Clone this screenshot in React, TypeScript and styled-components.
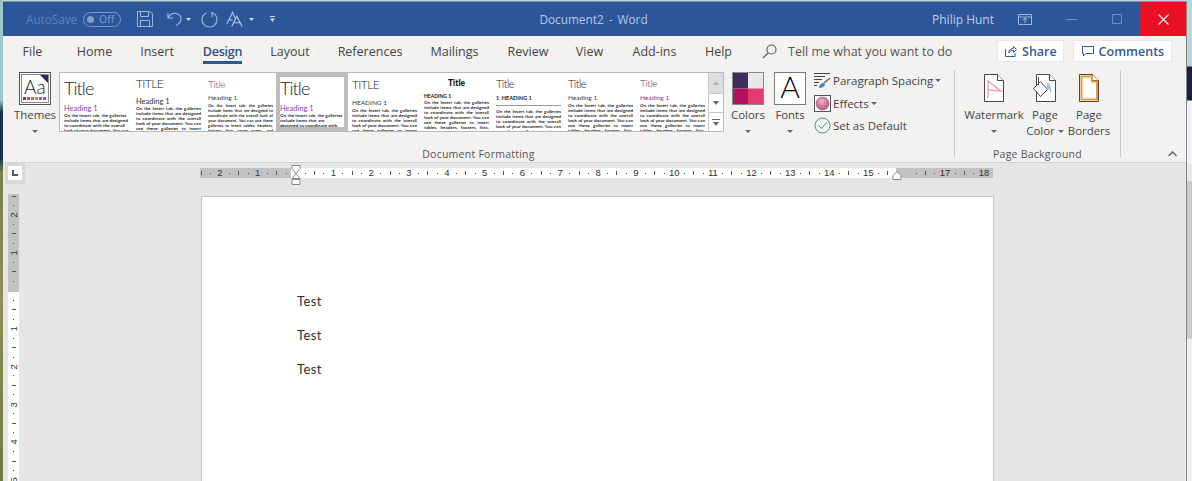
import React from "react";
import styled, { createGlobalStyle } from "styled-components";

const Global = createGlobalStyle`
  html, body { margin: 0; padding: 0; background: #b5d6dc; overflow: hidden; }
  * { box-sizing: border-box; }
`;

const UI = `"Open Sans", "Noto Sans", sans-serif`;
const DOC = `Lato, "Liberation Sans", sans-serif`;

const Screen = styled.div`
  display: flex;
  width: 1192px;
  height: 481px;
  overflow: hidden;
`;
const DesktopLeft = styled.div`
  flex: 0 0 3px;
  background: linear-gradient(180deg, #9cc8cc 0, #9cc8cc 100px, #14304e 112px, #14304e 158px, #7b7f4c 172px, #8f8d58 300px, #6f7a45 481px);
`;
const DesktopRight = styled.div`
  flex: 0 0 5px;
  background: linear-gradient(180deg, #b5d6dc 0, #b5d6dc 66px, #1a1e40 67px, #1a1e40 100px, #f1f3f6 101px, #f1f3f6 163px, #e9e9e9 164px, #e9e9e9 181px, #c8c8c8 182px, #c8c8c8 338px, #efefef 339px);
`;
const Window = styled.div`
  flex: 0 0 1184px;
  display: flex;
  flex-direction: column;
  margin-top: 1px;
  border-top: 1px solid #7f9aa3;
  border-right: 1px solid #858585;
  background: #e6e6e6;
  font-family: ${UI};
  overflow: hidden;
`;

const TitleBar = styled.div`
  flex: 0 0 34px;
  display: grid;
  grid-template-columns: 1fr auto 1fr;
  align-items: center;
  background: #2b579a;
`;
const Qat = styled.div`
  display: flex;
  align-items: center;
  padding-left: 23px;
  height: 100%;
`;
const AutoSave = styled.span`
  font-size: 11.7px;
  color: #5f84bb;
  width: 57px;
`;
const Toggle = styled.div`
  width: 38px;
  height: 15px;
  border: 1px solid #7d9ccb;
  border-radius: 8px;
  display: flex;
  align-items: center;
  gap: 5px;
  padding-left: 3px;
  font-size: 10.5px;
  color: #7d9ccb;
  line-height: 1;
  &::before {
    content: "";
    width: 7px;
    height: 7px;
    border-radius: 50%;
    background: #7d9ccb;
  }
`;
const QatIcon = styled.svg<{ $ml: number }>`
  margin-left: ${(p) => p.$ml}px;
  flex: none;
  display: block;
`;
const DocTitle = styled.div`
  font-size: 11.8px;
  color: #b7c8e2;
  word-spacing: 2px;
  white-space: pre;
  margin-left: -2px;
`;
const WinControls = styled.div`
  display: flex;
  align-items: center;
  justify-content: flex-end;
  height: 100%;
`;
const UserName = styled.span`
  font-size: 12px;
  color: #c0cfe6;
  margin-right: 8px;
`;
const WinBtn = styled.div<{ $w: number }>`
  flex: 0 0 ${(p) => p.$w}px;
  height: 100%;
  display: flex;
  align-items: center;
  justify-content: center;
`;
const CloseBtn = styled(WinBtn)`
  background: #e81123;
`;

const TabRow = styled.div`
  flex: 0 0 30px;
  display: flex;
  align-items: center;
  padding: 0 13px 0 7px;
  background: #f3f2f1;
  font-size: 12.5px;
  color: #444;
`;
const Tab = styled.div<{ $w: number; $active?: boolean }>`
  flex: 0 0 ${(p) => p.$w}px;
  text-align: center;
  color: #444;
  & > span {
    position: relative;
    display: inline-block;
    ${(p) => (p.$active ? "color:#33507f;font-weight:600;letter-spacing:-.2px;" : "")}
  }
  & > span::after {
    content: ${(p) => (p.$active ? '""' : "none")};
    position: absolute;
    left: 0;
    right: 0;
    bottom: -4px;
    height: 3px;
    background: #2b579a;
  }
`;
const SearchIcon = styled.svg`
  margin-left: 27px;
  flex: none;
`;
const TellMe = styled.div`
  margin-left: 11px;
  color: #555;
  font-size: 12.5px;
  white-space: nowrap;
`;
const HeaderBtn = styled.div<{ $w: number; $ml: number }>`
  flex: 0 0 ${(p) => p.$w}px;
  margin-left: ${(p) => p.$ml}px;
  height: 22px;
  background: #fff;
  border: 1px solid #e8e7e6;
  display: flex;
  align-items: center;
  justify-content: center;
  gap: 5px;
  font-size: 12.5px;
  font-weight: 600;
  color: #345a92;
`;

const Ribbon = styled.div`
  flex: 0 0 97px;
  display: flex;
  padding: 4px 0 5px;
  background: #f3f2f1;
  border-bottom: 1px solid #d2d2d2;
`;
const Group = styled.div<{ $w: number }>`
  flex: 0 0 ${(p) => p.$w}px;
  display: flex;
  flex-direction: column;
  border-right: 1px solid #c8c8c8;
`;
const GroupBody = styled.div<{ $pl: number }>`
  flex: 1;
  display: flex;
  align-items: flex-start;
  padding-left: ${(p) => p.$pl}px;
`;
const GroupLabel = styled.div`
  font-size: 10.5px;
  line-height: 14px;
  text-align: center;
  color: #555;
  letter-spacing: 0.25px;
  margin-bottom: -4px;
`;
const LargeBtn = styled.div<{ $w: number }>`
  flex: 0 0 ${(p) => p.$w}px;
  display: flex;
  flex-direction: column;
  align-items: center;
  padding-top: 2px;
  font-size: 11.4px;
  line-height: 16px;
  color: #444;
  text-align: center;
  white-space: nowrap;
`;
const IconSlot = styled.div`
  height: 33px;
  margin-bottom: 2px;
  display: flex;
  align-items: flex-start;
  justify-content: center;
`;
const Caret = styled.span`
  display: inline-block;
  width: 0;
  height: 0;
  border-left: 3px solid transparent;
  border-right: 3px solid transparent;
  border-top: 3px solid #666;
  vertical-align: middle;
`;
const CaretLine = styled.div`
  height: 16px;
  line-height: 15px;
`;

const Gallery = styled.div`
  flex: 0 0 665px;
  height: 60px;
  margin-top: 2px;
  display: flex;
  background: #fff;
  border: 1px solid #b9b9b9;
`;
const Thumb = styled.div<{ $selected?: boolean; $top: number }>`
  flex: 0 0 72px;
  height: 58px;
  padding: ${(p) => (p.$selected ? p.$top - 4 : p.$top)}px ${(p) => (p.$selected ? 0 : 3)}px 0 ${(p) => (p.$selected ? 0 : 4)}px;
  border: ${(p) => (p.$selected ? "4px solid #bdbdbd" : "0")};
  overflow: hidden;
  color: #222;
  font-family: ${DOC};
`;
const ThumbTitle = styled.div<{ $size: number; $color: string; $bold?: boolean; $center?: boolean; $lh: number }>`
  font-size: ${(p) => p.$size}px;
  line-height: ${(p) => p.$lh}px;
  color: ${(p) => p.$color};
  font-weight: ${(p) => (p.$bold ? 900 : 300)};
  letter-spacing: ${(p) => (p.$bold ? 0 : "-0.05em")};
  text-align: ${(p) => (p.$center ? "center" : "left")};
`;
const ThumbHead = styled.div<{ $size: number; $color: string; $bold?: boolean; $mt: number; $rule?: boolean }>`
  font-size: ${(p) => p.$size}px;
  line-height: ${(p) => p.$size + 2}px;
  margin-top: ${(p) => p.$mt}px;
  color: ${(p) => p.$color};
  font-weight: ${(p) => (p.$bold ? 700 : 400)};
  white-space: pre;
  ${(p) => (p.$rule ? "border-bottom:1px solid #999;padding-bottom:2px;" : "")}
`;
const ThumbBody = styled.div<{ $mt: number; $justify?: boolean; $size: number }>`
  font-size: ${(p) => p.$size}px;
  line-height: 5.1px;
  font-weight: 700;
  letter-spacing: 0.06px;
  margin-top: ${(p) => p.$mt}px;
  color: #1a1a1a;
  text-align: ${(p) => (p.$justify ? "justify" : "left")};
`;
const GalleryScroll = styled.div`
  flex: 0 0 15px;
  display: flex;
  flex-direction: column;
  border-left: 1px solid #c6c6c6;
`;
const ScrollCell = styled.div<{ $h: number; $off?: boolean }>`
  flex: 0 0 ${(p) => p.$h}px;
  background: ${(p) => (p.$off ? "#dedede" : "#fff")};
  border-bottom: 1px solid #c6c6c6;
  display: flex;
  flex-direction: column;
  gap: 1px;
  align-items: center;
  justify-content: center;
  &:last-child { border-bottom: 0; }
`;
const UpTri = styled.span<{ $c: string }>`
  width: 0;
  height: 0;
  border-left: 3.5px solid transparent;
  border-right: 3.5px solid transparent;
  border-bottom: 4px solid ${(p) => p.$c};
`;
const DownTri = styled.span`
  width: 0;
  height: 0;
  border-left: 3.5px solid transparent;
  border-right: 3.5px solid transparent;
  border-top: 4px solid #666;
`;
const Dash = styled.span`
  width: 8px;
  height: 1px;
  background: #666;
  margin-bottom: 1px;
`;

const SmallCol = styled.div`
  margin: -1px 0 0 6px;
  display: flex;
  flex-direction: column;
`;
const SmallRow = styled.div`
  height: 22.7px;
  display: flex;
  align-items: center;
  gap: 2px;
  font-size: 11.5px;
  color: #444;
  white-space: nowrap;
`;
const Collapse = styled.div`
  flex: 1;
  display: flex;
  align-items: flex-end;
  justify-content: flex-end;
  padding: 0 9px 0 0;
`;

const RulerRow = styled.div`
  flex: 0 0 33px;
  display: flex;
  align-items: flex-start;
`;
const Corner = styled.div`
  flex: 0 0 20px;
  height: 21px;
  margin-left: 2px;
  background: #d9d9d9;
  padding: 3px;
`;
const CornerInner = styled.div`
  height: 14px;
  background: #fff;
  display: flex;
  align-items: center;
  justify-content: center;
`;
const RulerH = styled.div`
  position: relative;
  flex: 0 0 793px;
  height: 10px;
  margin: 5px 0 0 175px;
  background: linear-gradient(90deg, #c2c2c2 0, #c2c2c2 91px, #fff 91px, #fff 696px, #c2c2c2 696px);
  display: flex;
  align-items: center;
`;
const TrackH = styled.div`
  display: flex;
  margin-left: -3.7px;
  height: 100%;
`;
const Cell = styled.div`
  flex: 0 0 9.4625px;
  height: 100%;
  display: flex;
  align-items: center;
  justify-content: center;
  font-size: 9.5px;
  font-family: "Liberation Sans", sans-serif;
  color: #333;
  line-height: 1;
`;
const Dot = styled.i`
  width: 1px;
  height: 1px;
  background: #444;
`;
const TickH = styled.i`
  width: 1px;
  height: 4px;
  background: #555;
`;
const Marker = styled.svg<{ $x: number; $y: number }>`
  position: absolute;
  left: ${(p) => p.$x}px;
  top: ${(p) => p.$y}px;
`;
const BodyRow = styled.div`
  flex: 1;
  display: flex;
  align-items: flex-start;
  min-height: 0;
`;
const RulerV = styled.div`
  flex: 0 0 11px;
  height: 300px;
  margin-left: 5px;
  margin-top: -2px;
  background: linear-gradient(180deg, #c2c2c2 0, #c2c2c2 98px, #fff 98px);
  overflow: hidden;
`;
const TrackV = styled.div`
  display: flex;
  flex-direction: column;
  margin-top: -2.7px;
`;
const CellV = styled.div`
  flex: 0 0 9.47px;
  height: 9.47px;
  display: flex;
  align-items: center;
  justify-content: center;
  font-size: 9.5px;
  font-family: "Liberation Sans", sans-serif;
  color: #333;
  line-height: 1;
  & > span { transform: rotate(-90deg); display: block; }
`;
const TickV = styled.i`
  width: 4px;
  height: 1px;
  background: #555;
`;
const Page = styled.div`
  flex: 0 0 793px;
  height: 290px;
  margin-left: 182px;
  background: #fff;
  border: 1px solid #c6c6c6;
  border-bottom: 0;
  padding: 95px 0 0 95px;
  font-family: ${DOC};
  font-size: 13px;
  letter-spacing: 0.4px;
  color: #2f2f2f;
`;
const Para = styled.p`
  margin: 0 0 16px;
  line-height: 18px;
`;
const DocSvg = styled.svg`
  margin-top: 1px;
  display: block;
`;

const BODY =
  "On the Insert tab, the galleries include items that are designed to coordinate with the overall look of your document. You can use these galleries to insert tables, headers, footers, lists, cover pages, and other document building blocks.";

type ThumbData = {
  top: number;
  title: string;
  size: number;
  lh: number;
  tColor: string;
  tBold?: boolean;
  tCenter?: boolean;
  head: string;
  hSize: number;
  hColor: string;
  hBold?: boolean;
  hMt: number;
  rule?: boolean;
  bMt: number;
  bSize?: number;
  justify?: boolean;
  selected?: boolean;
};

const PURPLE = "#8f3c9b";
const THUMBS: ThumbData[] = [
  { top: 6, title: "Title", size: 18, lh: 19, tColor: "#222", head: "Heading 1", hSize: 7.5, hColor: PURPLE, hMt: 6, bMt: -1 },
  { top: 3, title: "TITLE", size: 12, lh: 16, tColor: "#222", head: "Heading 1", hSize: 7.5, hColor: "#333", hMt: 5, bMt: -1, justify: true },
  { top: 4, title: "Title", size: 10.5, lh: 14, tColor: "#a02a7c", head: "Heading 1", hSize: 6.5, hColor: "#444", hMt: 3, bMt: 0, bSize: 4, justify: true },
  { top: 6, title: "Title", size: 18, lh: 19, tColor: "#222", head: "Heading 1", hSize: 7.5, hColor: PURPLE, hMt: 6, bMt: -1, selected: true },
  { top: 4, title: "TITLE", size: 12, lh: 16, tColor: "#222", head: "HEADING 1", hSize: 6.5, hColor: "#333", hMt: 6, bMt: 0, justify: true },
  { top: 5, title: "Title", size: 8.5, lh: 11, tColor: "#111", tBold: true, tCenter: true, head: "HEADING 1", hSize: 5, hColor: "#111", hBold: true, hMt: 4, bMt: 0, justify: true },
  { top: 4, title: "Title", size: 11, lh: 14, tColor: "#222", head: "1  HEADING 1", hSize: 5.5, hColor: "#222", hBold: true, hMt: 4, rule: true, bMt: 3, justify: true },
  { top: 4, title: "Title", size: 11, lh: 14, tColor: "#222", head: "Heading 1", hSize: 6.5, hColor: "#444", hMt: 3, bMt: 0, justify: true },
  { top: 4, title: "Title", size: 10.5, lh: 13, tColor: "#7a2a6c", head: "Heading 1", hSize: 6.5, hColor: "#8a3c80", hMt: 4, bMt: 0, justify: true },
];

const TABS: [string, number, boolean?][] = [
  ["File", 45],
  ["Home", 79],
  ["Insert", 46],
  ["Design", 85, true],
  ["Layout", 50],
  ["References", 110],
  ["Mailings", 59],
  ["Review", 88],
  ["View", 35],
  ["Add-ins", 95],
  ["Help", 33],
];

const rulerMark = (k: number, skip: number[]) => {
  if (skip.includes(k)) return null;
  if (k % 4 === 0) return Math.abs(k / 4);
  if (Math.abs(k % 4) === 2) return "tick";
  return "dot";
};

const HMarks = Array.from({ length: 83 }, (_, i) => i - 10);
const VMarks = Array.from({ length: 32 }, (_, i) => i - 10);

const ThemesIcon = () => (
  <svg width="32" height="33" viewBox="0 0 32 33">
    <rect x="0.5" y="0.5" width="31" height="32" fill="#fff" stroke="#555" />
    <rect x="2.5" y="2.5" width="27" height="28" fill="#fff" stroke="#8a8a8a" />
    <path d="M21 3h8v8z" fill="#2d2a55" />
    <text x="5" y="22" fontFamily="Lato, sans-serif" fontSize="19" fontWeight="300" fill="#222">Aa</text>
    {["#a8235a", "#c2417a", "#c96a3d", "#d08a3a", "#a05aa8", "#8a5ab8"].map((c, i) => (
      <rect key={c} x={4 + i * 4} y="25" width="3" height="3" fill={c} />
    ))}
  </svg>
);

const DocShape = ({ children }: { children?: React.ReactNode }) => (
  <DocSvg width="24" height="30" viewBox="0 0 24 30">
    <path d="M2.5 1.5h13l6 6v21h-19z" fill="#fff" stroke="#444" />
    <path d="M15.5 1.5v6h6" fill="#fff" stroke="#444" />
    {children}
  </DocSvg>
);

export default function App() {
  return (
    <>
      <Global />
      <Screen>
        <DesktopLeft />
        <Window>
          <TitleBar>
            <Qat>
              <AutoSave>AutoSave</AutoSave>
              <Toggle>Off</Toggle>
              <QatIcon $ml={16} width="16" height="16" viewBox="0 0 16 16" fill="none" stroke="#9db5d8">
                <path d="M.5.5h12.5l2.5 2.5v12.5H.5z" />
                <path d="M3.5.5v5h8v-5M3.5 15.5v-6h9v6" />
              </QatIcon>
              <QatIcon $ml={14} width="16" height="16" viewBox="0 0 16 16" fill="none" stroke="#9db5d8" strokeWidth="1.2">
                <path d="M1 2v5h5M1.500 6.500C3 3 6 2 9 2.500c3.500.7 5 3.500 5 5.500 0 3-2 5-5 6.500" />
              </QatIcon>
              <QatIcon $ml={3} width="5" height="3" viewBox="0 0 5 3" fill="#cfdcef"><path d="M0 0h5L2.500 3z" /></QatIcon>
              <QatIcon $ml={10} width="17" height="17" viewBox="0 0 17 17" fill="none" stroke="#9db5d8" strokeWidth="1.2">
                <path d="M11 1.500C14 3 16 5.500 16 8.500a7.500 7.500 0 1 1-15 0C1 5.500 3 3 5.500 2" />
                <path d="M11 1v5" />
              </QatIcon>
              <QatIcon $ml={8} width="17" height="17" viewBox="0 0 18 17" fill="none" stroke="#b9cbe6" strokeWidth="1.1">
                <path d="M1 13L7 1l3 7M6 16l5.500-11L17 16M8 12h7M3 9h4" />
              </QatIcon>
              <QatIcon $ml={6} width="5" height="3" viewBox="0 0 5 3" fill="#cfdcef"><path d="M0 0h5L2.500 3z" /></QatIcon>
              <QatIcon $ml={16} width="5" height="6" viewBox="0 0 5 6" fill="#cfdcef"><path d="M0 0h5v1H0zM0 2.500h5L2.500 6z" /></QatIcon>
            </Qat>
            <DocTitle>Document2 - Word</DocTitle>
            <WinControls>
              <UserName>Philip Hunt</UserName>
              <WinBtn $w={46}>
                <svg width="14" height="11" viewBox="0 0 14 11" fill="none" stroke="#9db5d8">
                  <path d="M.5.500h13v10H.5zM.5 3h13M7 9V4.500M5 6l2-2 2 2" />
                </svg>
              </WinBtn>
              <WinBtn $w={46}>
                <svg width="11" height="1" viewBox="0 0 11 1"><path d="M0 0h11v1H0z" fill="#6f90c2" /></svg>
              </WinBtn>
              <WinBtn $w={46}>
                <svg width="10" height="10" viewBox="0 0 10 10" fill="none" stroke="#6f90c2"><path d="M.5.500h9v9h-9z" /></svg>
              </WinBtn>
              <CloseBtn $w={46}>
                <svg width="11" height="11" viewBox="0 0 11 11" stroke="#fff" strokeWidth="1.1"><path d="M.5.500l10 10M10.500.500l-10 10" /></svg>
              </CloseBtn>
            </WinControls>
          </TitleBar>

          <TabRow>
            {TABS.map(([name, w, active]) => (
              <Tab key={name} $w={w} $active={active}><span>{name}</span></Tab>
            ))}
            <SearchIcon width="15" height="15" viewBox="0 0 15 15" fill="none" stroke="#555" strokeWidth="1.1">
              <circle cx="9.500" cy="5.500" r="4.500" />
              <path d="M6 9l-5 5" />
            </SearchIcon>
            <TellMe>Tell me what you want to do</TellMe>
            <HeaderBtn $w={67} $ml={45}>
              <svg width="12" height="12" viewBox="0 0 12 12" fill="none" stroke="#345a92">
                <path d="M.5 4v7.500h9.500V8" />
                <path d="M3.500 8c.5-3 2.500-4.500 5-4.500V1.500L11.500 4.500 8.500 7.500V5.500C6.500 5.500 4.500 6 3.500 8z" />
              </svg>
              Share
            </HeaderBtn>
            <HeaderBtn $w={99} $ml={9}>
              <svg width="12" height="11" viewBox="0 0 12 11" fill="none" stroke="#345a92">
                <path d="M.5.500h11v7H4L1.500 10V7.500H.5z" />
              </svg>
              Comments
            </HeaderBtn>
          </TabRow>

          <Ribbon>
            <Group $w={952}>
              <GroupBody $pl={8}>
                <LargeBtn $w={48}>
                  <IconSlot><ThemesIcon /></IconSlot>
                  Themes
                  <CaretLine><Caret /></CaretLine>
                </LargeBtn>
                <Gallery>
                  {THUMBS.map((t, i) => (
                    <Thumb key={i} $top={t.top} $selected={t.selected}>
                      <ThumbTitle $size={t.size} $lh={t.lh} $color={t.tColor} $bold={t.tBold} $center={t.tCenter}>{t.title}</ThumbTitle>
                      <ThumbHead $size={t.hSize} $color={t.hColor} $bold={t.hBold} $mt={t.hMt} $rule={t.rule}>{t.head}</ThumbHead>
                      <ThumbBody $mt={t.bMt} $justify={t.justify} $size={t.bSize ?? 4.5}>{BODY}</ThumbBody>
                    </Thumb>
                  ))}
                  <GalleryScroll>
                    <ScrollCell $h={21} $off><UpTri $c="#b5b5b5" /></ScrollCell>
                    <ScrollCell $h={19}><DownTri /></ScrollCell>
                    <ScrollCell $h={18}><Dash /><DownTri /></ScrollCell>
                  </GalleryScroll>
                </Gallery>
                <LargeBtn $w={48}>
                  <IconSlot>
                    <svg width="32" height="33" viewBox="0 0 32 33">
                      <path d="M0 0h16v16.500H0z" fill="#3d2d5e" />
                      <path d="M16 0h16v16.500H16z" fill="#e8e8ea" />
                      <path d="M0 16.500h16V33H0z" fill="#b3125f" />
                      <path d="M16 16.500h16V33H16z" fill="#e43a6c" />
                      <rect x=".5" y=".5" width="31" height="32" fill="none" stroke="#8a8a8a" />
                    </svg>
                  </IconSlot>
                  Colors
                  <CaretLine><Caret /></CaretLine>
                </LargeBtn>
                <LargeBtn $w={36}>
                  <IconSlot>
                    <svg width="32" height="33" viewBox="0 0 32 33">
                      <rect x=".5" y=".5" width="31" height="32" fill="#fff" stroke="#7a7a7a" />
                      <text x="16" y="26" textAnchor="middle" fontFamily="Lato, sans-serif" fontSize="30" fontWeight="300" fill="#000">A</text>
                    </svg>
                  </IconSlot>
                  Fonts
                  <CaretLine><Caret /></CaretLine>
                </LargeBtn>
                <SmallCol>
                  <SmallRow>
                    <svg width="17" height="17" viewBox="0 0 17 17" fill="none">
                      <path d="M0 1.500h16M0 4.500h11M0 7.500h8M0 10.500h5M0 13.500h3" stroke="#444" />
                      <path d="M16 6L10 11" stroke="#666" strokeWidth="1.500" />
                      <path d="M5 16c0-3 2-5 5-5l1 2c-1 2-3 3-6 3z" fill="#3d84c6" />
                    </svg>
                    Paragraph Spacing <Caret />
                  </SmallRow>
                  <SmallRow>
                    <svg width="17" height="17" viewBox="0 0 17 17">
                      <defs>
                        <radialGradient id="fx" cx="45%" cy="35%" r="70%">
                          <stop offset="0" stopColor="#eab6ca" />
                          <stop offset="1" stopColor="#b84a7c" />
                        </radialGradient>
                      </defs>
                      <rect x=".5" y=".5" width="16" height="16" fill="#fff" stroke="#555" />
                      <circle cx="8.500" cy="8.500" r="6.500" fill="url(#fx)" stroke="#8e3a62" strokeWidth=".5" />
                    </svg>
                    Effects <Caret />
                  </SmallRow>
                  <SmallRow>
                    <svg width="17" height="17" viewBox="0 0 17 17" fill="none" stroke="#3c9a62">
                      <circle cx="8.500" cy="8.500" r="7.500" />
                      <path d="M4.500 8.500l3 3 5-6" />
                    </svg>
                    Set as Default
                  </SmallRow>
                </SmallCol>
              </GroupBody>
              <GroupLabel>Document Formatting</GroupLabel>
            </Group>
            <Group $w={166}>
              <GroupBody $pl={7}>
                <LargeBtn $w={64}>
                  <IconSlot>
                    <DocShape>
                      <path d="M6 25V8l13 10-12-1" fill="none" stroke="#f2a7b4" strokeWidth="1.600" />
                    </DocShape>
                  </IconSlot>
                  Watermark
                  <CaretLine><Caret /></CaretLine>
                </LargeBtn>
                <LargeBtn $w={38}>
                  <IconSlot>
                    <DocSvg width="24" height="30" viewBox="0 0 24 30">
                      <path d="M3.500 1.500h13l6 6v21h-19z" fill="#fff" stroke="#444" />
                      <path d="M16.500 1.500v6h6" fill="#fff" stroke="#444" />
                      <path d="M.5 15.500l7-7 7 8-7 7z" fill="#fff" stroke="#444" />
                      <path d="M5.500 4v8" stroke="#444" fill="none" />
                      <path d="M14 10c3 0 5 3 4 11-1-3-2-5-4-6z" fill="#9cc5e8" />
                    </DocSvg>
                  </IconSlot>
                  Page
                  <div>Color <Caret /></div>
                </LargeBtn>
                <LargeBtn $w={50}>
                  <IconSlot>
                    <DocShape>
                      <path d="M4.500 3.500h10.500v5h5v18H4.500z" fill="none" stroke="#e8993f" strokeWidth="2" />
                    </DocShape>
                  </IconSlot>
                  Page
                  <div>Borders</div>
                </LargeBtn>
              </GroupBody>
              <GroupLabel>Page Background</GroupLabel>
            </Group>
            <Collapse>
              <svg width="9" height="6" viewBox="0 0 9 6" fill="none" stroke="#666" strokeWidth="1.500">
                <path d="M.5 5l4-4 4 4" />
              </svg>
            </Collapse>
          </Ribbon>

          <RulerRow>
            <Corner>
              <CornerInner>
                <svg width="6" height="6" viewBox="0 0 6 6"><path d="M0 0h2v4h4v2H0z" fill="#555" /></svg>
              </CornerInner>
            </Corner>
            <RulerH>
              <TrackH>
                {HMarks.map((k) => {
                  const m = rulerMark(k, [0, 64]);
                  return (
                    <Cell key={k}>
                      {m === "dot" ? <Dot /> : m === "tick" ? <TickH /> : m}
                    </Cell>
                  );
                })}
              </TrackH>
              <Marker $x={91} $y={-3} width="10" height="21" viewBox="0 0 10 21" fill="#fff" stroke="#888">
                <path d="M1 .5h8v3L5 8.500 1 3.500zM5 8.500l4 5H1z" />
                <path d="M1 14.500h8v5H1z" />
              </Marker>
              <Marker $x={692} $y={3} width="10" height="9" viewBox="0 0 10 9" fill="#fff" stroke="#888">
                <path d="M5 .5l4 4v4H1v-4z" />
              </Marker>
            </RulerH>
          </RulerRow>

          <BodyRow>
            <RulerV>
              <TrackV>
                {VMarks.map((k) => {
                  const m = rulerMark(k, [0]);
                  return (
                    <CellV key={k}>
                      {m === "dot" ? <Dot /> : m === "tick" ? <TickV /> : m === null ? null : <span>{m}</span>}
                    </CellV>
                  );
                })}
              </TrackV>
            </RulerV>
            <Page>
              <Para>Test</Para>
              <Para>Test</Para>
              <Para>Test</Para>
            </Page>
          </BodyRow>
        </Window>
        <DesktopRight />
      </Screen>
    </>
  );
}
